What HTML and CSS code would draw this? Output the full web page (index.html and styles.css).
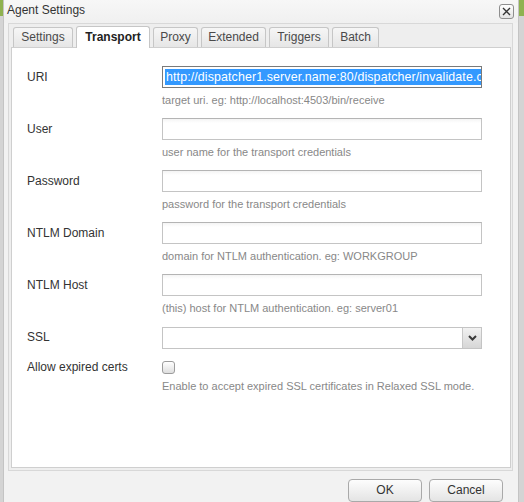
FILE: index.html
```html
<!DOCTYPE html>
<html>
<head>
<meta charset="utf-8">
<title>Agent Settings</title>
<link rel="stylesheet" href="styles.css">
</head>
<body>
<div class="dialog">
  <div class="titlebar">
    <span class="title">Agent Settings</span>
    <span class="close"><svg width="13" height="13" viewBox="0 0 13 13"><path d="M3 3 L10 10 M10 3 L3 10" stroke="#333" stroke-width="1.4" fill="none"/></svg></span>
  </div>
  <div class="tabframe">
    <div class="tabs">
      <div class="tab tab-settings">Settings</div>
      <div class="tab tab-transport active">Transport</div>
      <div class="tab tab-proxy">Proxy</div>
      <div class="tab tab-extended">Extended</div>
      <div class="tab tab-triggers">Triggers</div>
      <div class="tab tab-batch">Batch</div>
    </div>
    <div class="content">
      <div class="row">
        <div class="label">URI</div>
        <div class="field">
          <div class="input focused"><span class="sel">http://dispatcher1.server.name:80/dispatcher/invalidate.c</span></div>
          <div class="hint">target uri. eg: http://localhost:4503/bin/receive</div>
        </div>
      </div>
      <div class="row">
        <div class="label">User</div>
        <div class="field">
          <div class="input"></div>
          <div class="hint">user name for the transport credentials</div>
        </div>
      </div>
      <div class="row">
        <div class="label">Password</div>
        <div class="field">
          <div class="input"></div>
          <div class="hint">password for the transport credentials</div>
        </div>
      </div>
      <div class="row">
        <div class="label">NTLM Domain</div>
        <div class="field">
          <div class="input"></div>
          <div class="hint">domain for NTLM authentication. eg: WORKGROUP</div>
        </div>
      </div>
      <div class="row">
        <div class="label">NTLM Host</div>
        <div class="field">
          <div class="input"></div>
          <div class="hint">(this) host for NTLM authentication. eg: server01</div>
        </div>
      </div>
      <div class="row">
        <div class="label">SSL</div>
        <div class="field">
          <div class="select">
            <span class="arrow"><svg width="9" height="6" viewBox="0 0 9 6"><path d="M1 1 L4.5 4.5 L8 1" stroke="#3a3a3a" stroke-width="2" fill="none"/></svg></span>
          </div>
        </div>
      </div>
      <div class="row check-row">
        <div class="label check-label">Allow expired certs</div>
        <div class="field">
          <div class="checkline"><span class="checkbox"></span></div>
          <div class="hint check-hint">Enable to accept expired SSL certificates in Relaxed SSL mode.</div>
        </div>
      </div>
    </div>
  </div>
  <div class="buttons">
    <div class="btn">OK</div>
    <div class="btn">Cancel</div>
  </div>
</div>
</body>
</html>
```
FILE: styles.css
```css
html, body {
  margin: 0;
  padding: 0;
}
body {
  width: 524px;
  height: 502px;
  overflow: hidden;
  background: linear-gradient(to bottom, #8fb250 0, #8fb250 16px, #d4d4d4 16px, #d4d4d4 100%);
  font-family: "Liberation Sans", Arial, sans-serif;
  font-size: 12px;
  color: #333;
}
.dialog {
  box-sizing: border-box;
  margin-left: 3px;
  width: 516px;
  height: 502px;
  background: #f2f2f2;
  border-left: 1px solid #c4c4c4;
  border-right: 1px solid #c4c4c4;
}
.titlebar {
  height: 23px;
  display: flex;
  align-items: flex-start;
  justify-content: space-between;
  background: linear-gradient(to bottom, #f7f7f7, #f0f0f0);
}
.title {
  padding-left: 3px;
  line-height: 21px;
  font-size: 12px;
  color: #333;
}
.close {
  box-sizing: border-box;
  width: 15px;
  height: 15px;
  margin-top: 4px;
  margin-right: 4px;
  border: 1px solid #8e8e8e;
  border-radius: 3px;
  background: linear-gradient(to bottom, #ffffff, #e2e2e2);
  display: flex;
  align-items: center;
  justify-content: center;
}
.close svg { display: block; }
.tabframe {
  box-sizing: border-box;
  width: 505px;
  height: 448px;
  margin-left: 4px;
  border: 1px solid #d8d8d8;
  padding: 0 1px 2px 2px;
  background: #eeeeee;
  display: flex;
  flex-direction: column;
}
.tabs {
  display: flex;
  align-items: flex-end;
  gap: 3px;
  padding-top: 2px;
  padding-left: 2px;
  height: 21px;
  position: relative;
  z-index: 1;
}
.tab {
  box-sizing: border-box;
  height: 20px;
  line-height: 18px;
  text-align: center;
  border: 1px solid #c6c6c6;
  border-bottom: none;
  border-radius: 3px 3px 0 0;
  background: linear-gradient(to bottom, #f6f6f6, #e6e6e6);
  color: #4a4a4a;
  font-size: 12px;
}
.tab-settings { width: 60px; }
.tab-transport { width: 74px; }
.tab-proxy { width: 45px; }
.tab-extended { width: 65px; }
.tab-triggers { width: 60px; }
.tab-batch { width: 47px; }
.tab.active {
  height: 22px;
  line-height: 21px;
  background: #ffffff;
  font-weight: bold;
  color: #222;
  margin-bottom: -1px;
}
.content {
  flex: 1;
  background: #ffffff;
  border: 1px solid #cfcfcf;
  padding: 18px 0 0 15px;
}
.row {
  display: grid;
  grid-template-columns: 135px 320px;
}
.label {
  line-height: 22px;
  font-size: 12px;
  color: #333;
}
.input {
  box-sizing: border-box;
  height: 22px;
  border: 1px solid #c4c4c4;
  border-top-color: #b4b4b4;
  background: linear-gradient(to bottom, #f4f4f4 0, #ffffff 4px);
  overflow: hidden;
  white-space: nowrap;
  padding: 2px 0 0 2px;
}
.input.focused {
  border-color: #7a7a7a;
  background: #ffffff;
}
.sel {
  display: inline-block;
  background: #3399ff;
  color: #ffffff;
  font-size: 12.4px;
  line-height: 16px;
  padding: 0 1px;
  letter-spacing: 0.12px;
}
.hint {
  margin-top: 5px;
  margin-bottom: 11px;
  line-height: 14px;
  font-size: 11px;
  color: #888888;
  white-space: nowrap;
}
.select {
  box-sizing: border-box;
  height: 22px;
  margin-top: 1px;
  margin-bottom: 11px;
  border: 1px solid #c4c4c4;
  background: #ffffff;
  display: flex;
  justify-content: flex-end;
}
.arrow {
  width: 18px;
  border-left: 1px solid #c8c8c8;
  background: linear-gradient(to bottom, #f2f2f2, #d6d6d6);
  display: flex;
  align-items: center;
  justify-content: center;
}
.arrow svg { display: block; }
.check-label {
  line-height: 15px;
}
.checkline {
  height: 15px;
  display: flex;
  align-items: center;
}
.checkbox {
  box-sizing: border-box;
  width: 13px;
  height: 13px;
  border: 1px solid #9c9c9c;
  border-radius: 3px;
  background: linear-gradient(to bottom, #ffffff, #dedede);
}
.check-hint {
  margin-top: 4px;
}
.buttons {
  display: flex;
  justify-content: flex-end;
  gap: 7px;
  padding-top: 8px;
  padding-right: 15px;
}
.btn {
  box-sizing: border-box;
  width: 74px;
  height: 23px;
  line-height: 21px;
  text-align: center;
  border: 1px solid #a9a9a9;
  border-radius: 4px;
  background: linear-gradient(to bottom, #fdfdfd, #e4e4e4);
  color: #333;
  font-size: 12px;
}
```
